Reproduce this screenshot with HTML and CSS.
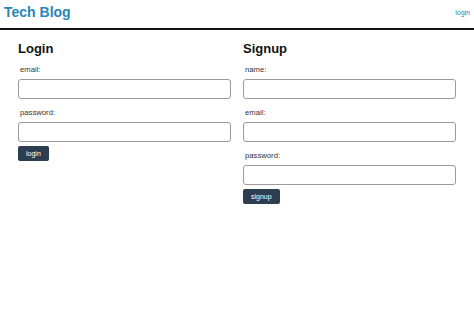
FILE: index.html
```html
<!DOCTYPE html>
<html lang="en">
<head>
<meta charset="utf-8">
<title>Tech Blog</title>
<link rel="stylesheet" href="styles.css">
</head>
<body>
<header class="site-header">
  <a class="brand" href="#">Tech Blog</a>
  <nav class="nav"><a class="nav-link" href="#">login</a></nav>
</header>
<main class="forms">
  <section class="panel">
    <h2 class="panel-title">Login</h2>
    <form class="form">
      <div class="field">
        <label class="field-label" for="login-email">email:</label>
        <input class="field-input" id="login-email" type="email">
      </div>
      <div class="field">
        <label class="field-label" for="login-password">password:</label>
        <input class="field-input" id="login-password" type="password">
      </div>
      <button class="btn" type="button">login</button>
    </form>
  </section>
  <section class="panel">
    <h2 class="panel-title">Signup</h2>
    <form class="form">
      <div class="field">
        <label class="field-label" for="signup-name">name:</label>
        <input class="field-input" id="signup-name" type="text">
      </div>
      <div class="field">
        <label class="field-label" for="signup-email">email:</label>
        <input class="field-input" id="signup-email" type="email">
      </div>
      <div class="field">
        <label class="field-label" for="signup-password">password:</label>
        <input class="field-input" id="signup-password" type="password">
      </div>
      <button class="btn" type="button">signup</button>
    </form>
  </section>
</main>
</body>
</html>
```
FILE: styles.css
```css
* { box-sizing: border-box; }

html, body {
  margin: 0;
  padding: 0;
  background: #ffffff;
  font-family: "Liberation Sans", Arial, sans-serif;
  color: #222;
}

.site-header {
  display: flex;
  justify-content: space-between;
  align-items: flex-start;
  height: 30px;
  padding: 4px 4px 0 4px;
  border-bottom: 2px solid #111;
}

.brand {
  font-size: 14px;
  line-height: 16px;
  font-weight: bold;
  color: #2a86b8;
  text-decoration: none;
}

.nav-link {
  display: block;
  margin-top: 4px;
  font-size: 7px;
  line-height: 10px;
  color: #2a86b8;
  text-decoration: none;
}

.forms {
  display: grid;
  grid-template-columns: 1fr 1fr;
  column-gap: 12px;
  padding: 12px 18px 0 18px;
}

.panel-title {
  margin: 0;
  font-size: 13px;
  line-height: 14px;
  font-weight: bold;
  color: #111;
}

.form {
  display: flex;
  flex-direction: column;
  align-items: flex-start;
}

.field {
  width: 100%;
  display: flex;
  flex-direction: column;
}

.field-label {
  padding: 9px 0 0 2px;
  margin-bottom: 4px;
  font-size: 7.7px;
  line-height: 10px;
  color: #333;
}

.field-input {
  width: 100%;
  height: 20px;
  margin: 0;
  border: 1px solid #9a9a9a;
  border-radius: 3px;
  background: #fff;
}

.btn {
  margin-top: 4px;
  height: 15px;
  padding: 0 8px;
  border: none;
  border-radius: 2px;
  background: #2c3e50;
  color: #fff;
  font-family: "Liberation Sans", Arial, sans-serif;
  font-size: 7px;
  line-height: 15px;
}
```
